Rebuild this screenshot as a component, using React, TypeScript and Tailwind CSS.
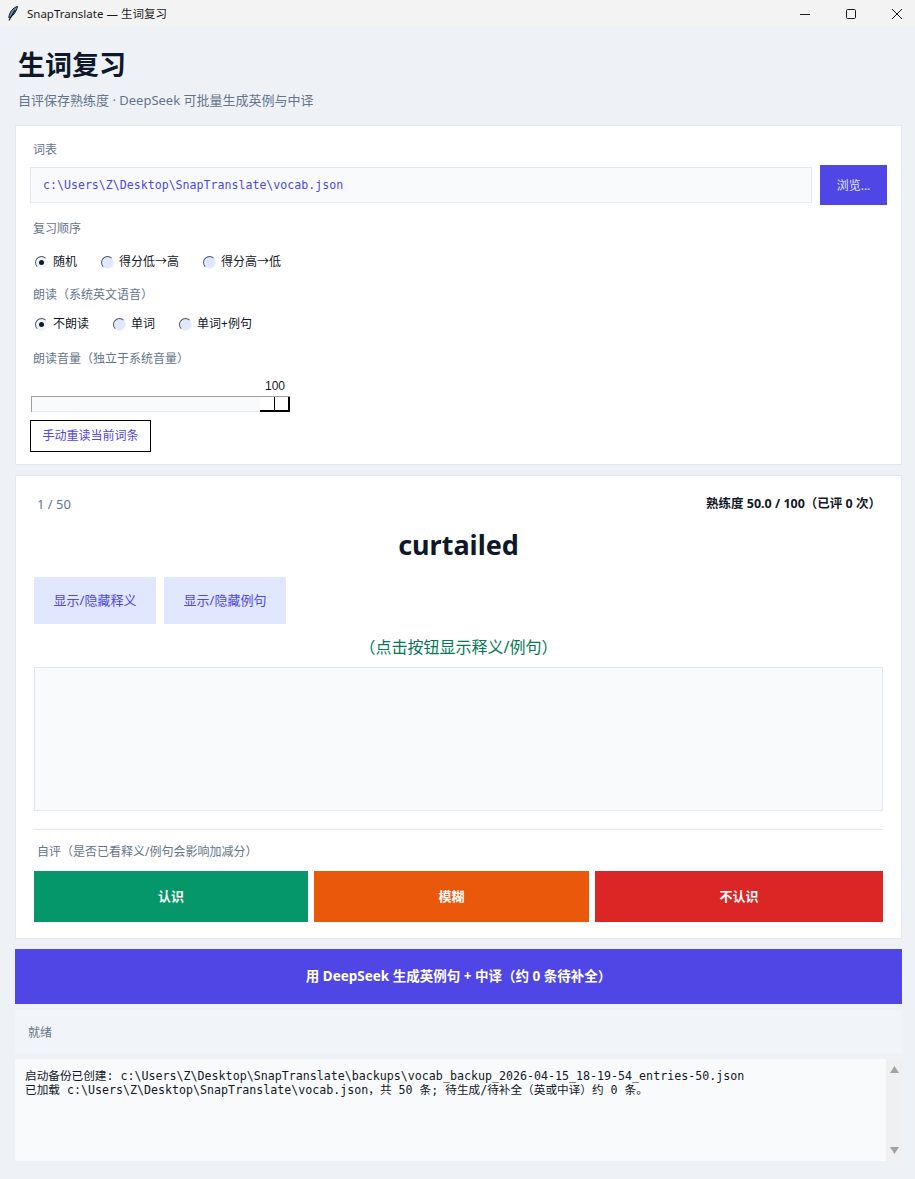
import React from "react";

const sans = "font-['Noto_Sans','Noto_Sans_CJK_SC',sans-serif]";
const mono = "font-['DejaVu_Sans_Mono','Noto_Sans_CJK_SC',monospace]";

function Radio({ label, checked }: { label: string; checked?: boolean }) {
  return (
    <div className="flex items-center gap-[5px] text-[12px] leading-[16px] text-[#111827]">
      <span
        className={`flex h-[13px] w-[13px] items-center justify-center rounded-full border border-b-[#f1f5f9] border-l-[#4b5563] border-r-[#f1f5f9] border-t-[#4b5563] ${
          checked ? "bg-[#f1f5f9]" : "bg-[#e0e7ff]"
        }`}
      >
        {checked ? <span className="h-[5px] w-[5px] rounded-full bg-[#111827]" /> : null}
      </span>
      <span>{label}</span>
    </div>
  );
}

function Label({ children, className = "" }: { children: React.ReactNode; className?: string }) {
  return <div className={`text-[12px] leading-[16px] text-[#64748b] ${className}`}>{children}</div>;
}

function Feather() {
  return (
    <svg width="12" height="16" viewBox="0 0 12 16" className="ml-[7px]">
      <path d="M10.5 0.5C6 1.5 2.5 6 1.8 11.5L2.2 12C5 11 9.5 6 10.5 0.5Z" fill="#6b8fb0" stroke="#0f172a" strokeWidth="1" />
      <path d="M8 4L2 14.5" stroke="#0f172a" strokeWidth="1.2" />
    </svg>
  );
}

export default function App() {
  return (
    <div className={`${sans} flex h-[1179px] w-[915px] flex-col overflow-hidden bg-[#eef2f7]`}>
      <div className="flex h-[27px] shrink-0 items-center bg-[#f3f3f3]">
        <Feather />
        <span className="ml-[8px] text-[11.5px] leading-[16px] text-[#1a1a1a]">SnapTranslate — 生词复习</span>
        <div className="ml-auto flex items-center">
          <svg width="12" height="12" viewBox="0 0 12 12" className="mr-[34px]">
            <path d="M1 6.5H11" stroke="#1a1a1a" strokeWidth="1" />
          </svg>
          <svg width="12" height="12" viewBox="0 0 12 12" className="mr-[34px]">
            <rect x="1.5" y="1.5" width="9" height="9" rx="1.2" fill="none" stroke="#1a1a1a" strokeWidth="1" />
          </svg>
          <svg width="12" height="12" viewBox="0 0 12 12" className="mr-[12px]">
            <path d="M1 1L11 11M11 1L1 11" stroke="#1a1a1a" strokeWidth="1" />
          </svg>
        </div>
      </div>

      <div className="flex flex-1 flex-col pl-[15px] pr-[13px]">
        <div className="ml-[3px] mt-[19px] text-[27px] font-bold leading-[38px] text-[#0f172a]">生词复习</div>
        <div className="ml-[3px] mt-[6px] text-[13px] leading-[20px] text-[#64748b]">
          自评保存熟练度 · DeepSeek 可批量生成英例与中译
        </div>

        <div className="mt-[15px] h-[340px] shrink-0 border border-[#e2e8f0] bg-white px-[14px]">
          <Label className="ml-[3px] mt-[16px]">词表</Label>
          <div className="mt-[7px] flex items-start">
            <div className={`${mono} mt-[2px] flex h-[36px] w-[782px] items-center border border-[#e2e8f0] bg-[#f8fafc] pl-[12px] pt-[1px] text-[11.6px] text-[#4f46e5]`}>
              c:\Users\Z\Desktop\SnapTranslate\vocab.json
            </div>
            <div className="ml-[8px] flex h-[40px] w-[67px] items-center justify-center bg-[#4f46e5] pt-[1px] text-[12px] text-[#e0e7ff]">
              浏览...
            </div>
          </div>
          <Label className="ml-[3px] mt-[16px]">复习顺序</Label>
          <div className="ml-[5px] mt-[17px] flex gap-[24px]">
            <Radio label="随机" checked />
            <Radio label="得分低→高" />
            <Radio label="得分高→低" />
          </div>
          <Label className="ml-[3px] mt-[17px]">朗读（系统英文语音）</Label>
          <div className="ml-[5px] mt-[13px] flex gap-[24px]">
            <Radio label="不朗读" checked />
            <Radio label="单词" />
            <Radio label="单词+例句" />
          </div>
          <Label className="ml-[3px] mt-[19px]">朗读音量（独立于系统音量）</Label>
          <div className="ml-[1px] w-[259px]">
            <div className="mt-[12px] pr-[5px] text-right font-['Liberation_Sans',sans-serif] text-[12px] leading-[14px] text-[#111827]">100</div>
            <div className="mt-[3px] flex h-[16px] border-l border-t border-[#a0a0a0] bg-[#f8fafc]">
              <div className="flex-1 border-b border-[#e5e7eb]" />
              <div className="flex h-[15px] w-[30px] border-b-2 border-r-2 border-black bg-white">
                <div className="w-[15px] border-r border-black" />
              </div>
            </div>
          </div>
          <div className="mt-[8px] flex h-[32px] w-[121px] items-center justify-center border border-black bg-white text-[12px] text-[#4f46e5]">
            手动重读当前词条
          </div>
        </div>

        <div className="mt-[10px] h-[464px] shrink-0 border border-[#e2e8f0] bg-white px-[18px]">
          <div className="mt-[19px] flex items-center justify-between leading-[18px]">
            <span className="ml-[3px] text-[13px] text-[#64748b]">1 / 50</span>
            <span className="mr-[2px] text-[12.5px] font-bold text-[#111827]">熟练度 50.0 / 100（已评 0 次）</span>
          </div>
          <div className="mt-[11px] text-center text-[27px] font-bold leading-[42px] text-[#0f172a]">curtailed</div>
          <div className="mt-[11px] flex gap-[8px]">
            <div className="flex h-[47px] w-[122px] items-center justify-center bg-[#e0e7ff] text-[13px] text-[#4f46e5]">显示/隐藏释义</div>
            <div className="flex h-[47px] w-[122px] items-center justify-center bg-[#e0e7ff] text-[13px] text-[#4f46e5]">显示/隐藏例句</div>
          </div>
          <div className="mt-[11px] text-center text-[16px] leading-[24px] text-[#047857]">（点击按钮显示释义/例句）</div>
          <div className="mt-[8px] h-[144px] border border-[#e2e8f0] bg-[#f8fafc]" />
          <div className="mt-[18px] border-t border-[#e2e8f0]" />
          <Label className="ml-[3px] mt-[14px]">自评（是否已看释义/例句会影响加减分）</Label>
          <div className="mt-[11px] flex gap-[6px] text-[13px] font-bold text-white">
            <div className="flex h-[51px] w-[274px] items-center justify-center bg-[#059669]">认识</div>
            <div className="flex h-[51px] w-[275px] items-center justify-center bg-[#ea580c]">模糊</div>
            <div className="flex h-[51px] w-[288px] items-center justify-center bg-[#dc2626]">不认识</div>
          </div>
        </div>

        <div className="mt-[10px] flex h-[55px] shrink-0 items-center justify-center bg-[#4f46e5] text-[13.5px] font-bold text-white">
          用 DeepSeek 生成英例句 + 中译（约 0 条待补全）
        </div>

        <div className="mt-[6px] flex h-[43px] shrink-0 items-center bg-[#f1f5f9] pl-[13px] pt-[2px] text-[12px] text-[#64748b]">就绪</div>

        <div className="mt-[6px] flex h-[102px] shrink-0">
          <div className={`${mono} h-full w-[871px] bg-[#f8fafc] pl-[10px] pt-[10px] text-[11.65px] leading-[14px] text-[#111827]`}>
            <div className="whitespace-pre">启动备份已创建: c:\Users\Z\Desktop\SnapTranslate\backups\vocab_backup_2026-04-15_18-19-54_entries-50.json</div>
            <div className="whitespace-pre">已加载 c:\Users\Z\Desktop\SnapTranslate\vocab.json，共 50 条; 待生成/待补全（英或中译）约 0 条。</div>
          </div>
          <div className="flex h-full w-[16px] flex-col items-center justify-between bg-[#f0f0f0] py-[7px]">
            <svg width="9" height="7" viewBox="0 0 9 7"><path d="M4.5 0L9 7H0Z" fill="#a3a3a3" /></svg>
            <svg width="9" height="7" viewBox="0 0 9 7"><path d="M0 0H9L4.5 7Z" fill="#a3a3a3" /></svg>
          </div>
        </div>
      </div>
    </div>
  );
}
